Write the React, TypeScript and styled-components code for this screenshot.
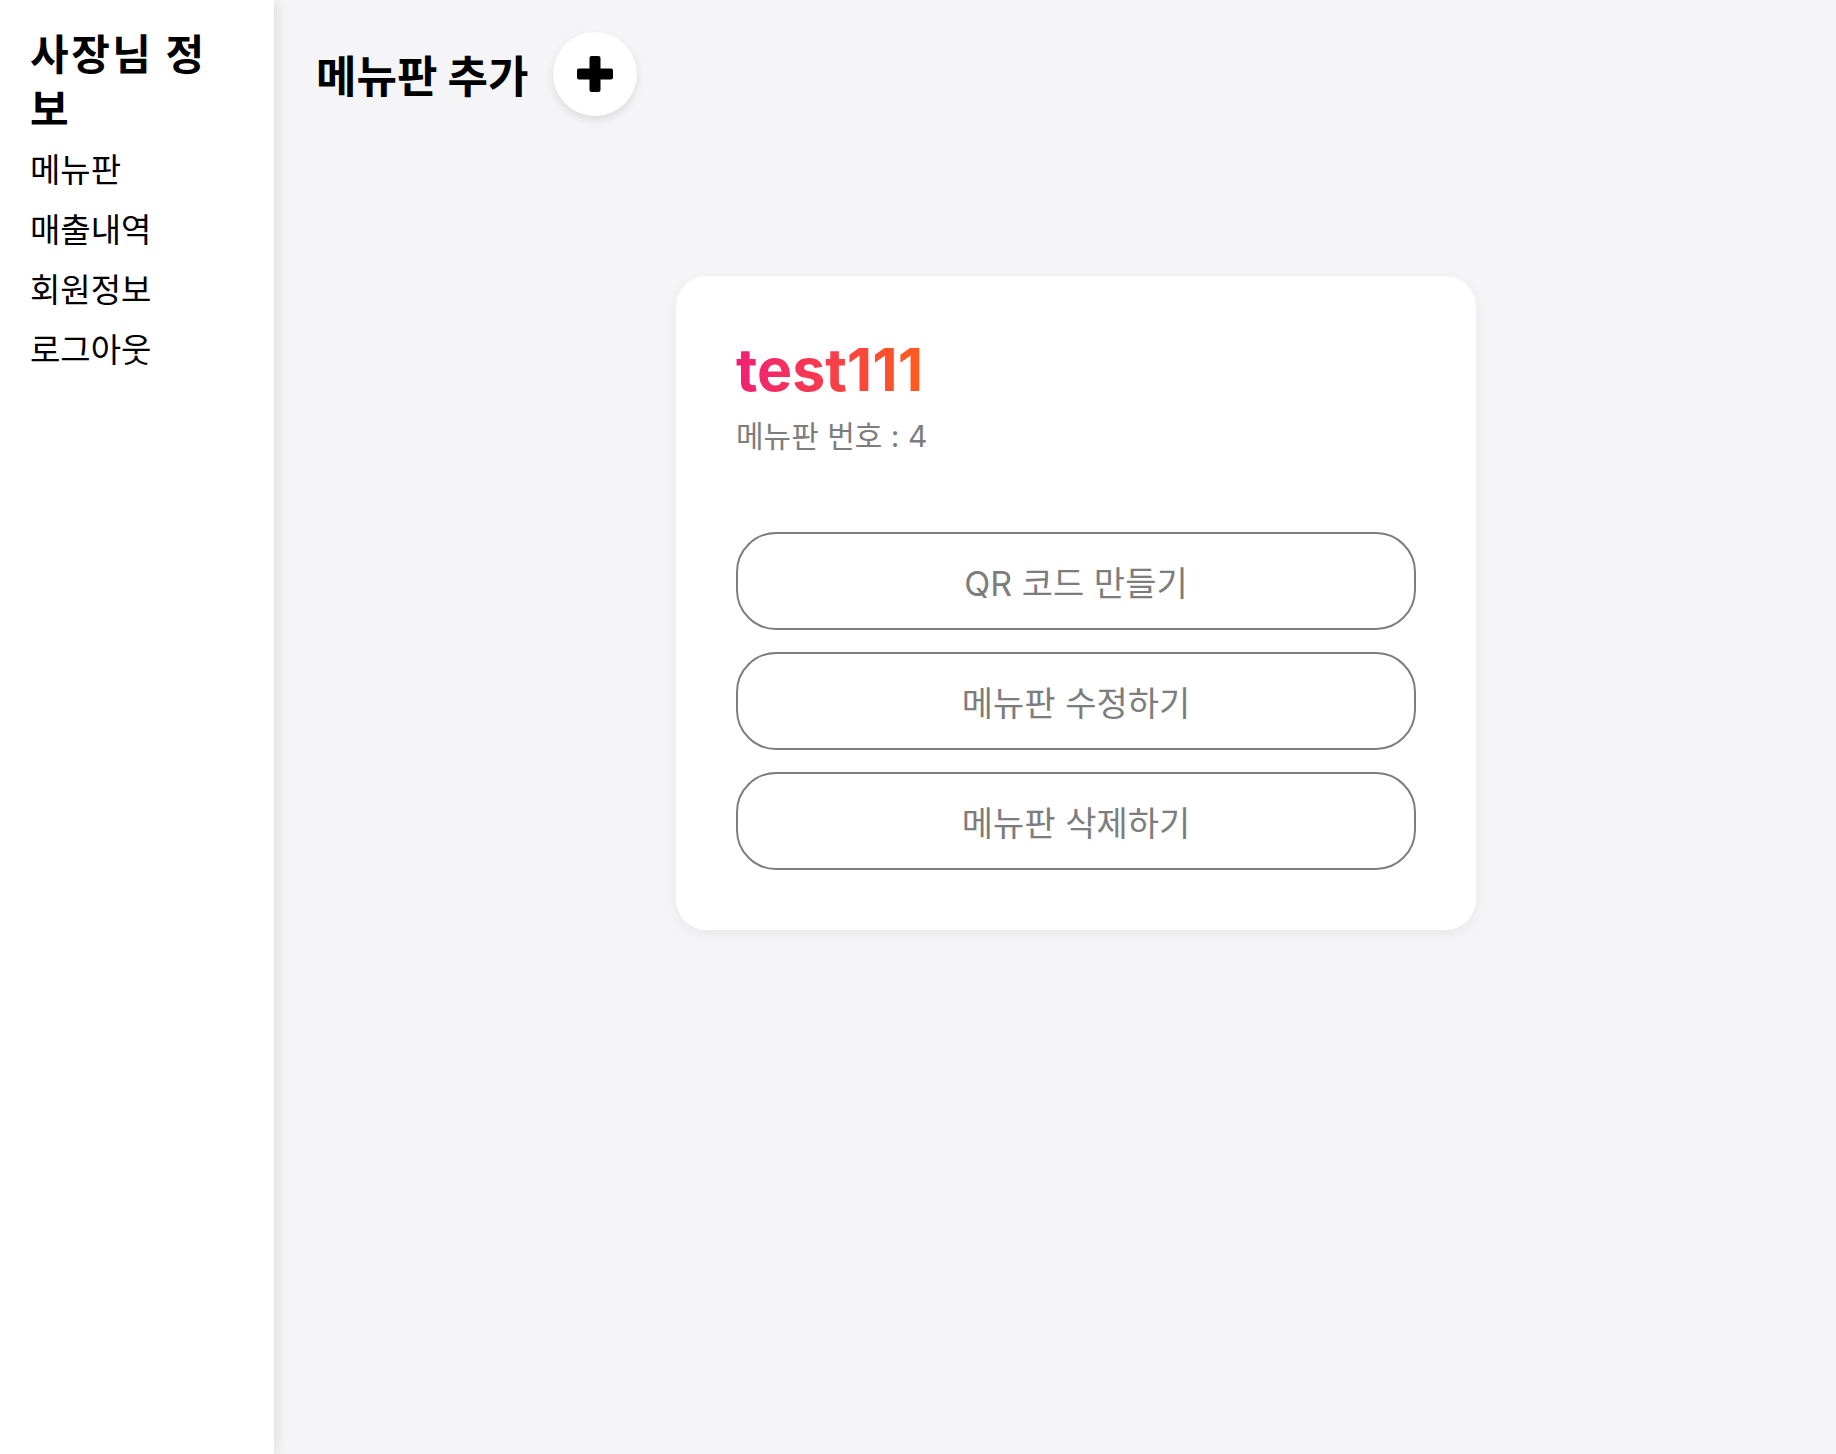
import styled, { createGlobalStyle } from 'styled-components';

const GlobalStyle = createGlobalStyle`
  html, body {
    margin: 0;
    padding: 0;
    height: 100%;
  }
  body {
    font-family: 'Inter', 'Noto Sans CJK KR', sans-serif;
    color: #000;
  }
  #root {
    height: 100%;
  }
`;

const Layout = styled.div`
  display: flex;
  min-height: 100vh;
`;

const Sidebar = styled.aside`
  width: 274px;
  flex-shrink: 0;
  box-sizing: border-box;
  padding: 24px 30px;
  background-color: #fff;
  box-shadow: 3px 0 12px rgba(0, 0, 0, 0.09);
  position: relative;
  z-index: 1;
`;

const SidebarTitle = styled.h2`
  margin: 0 0 4px;
  max-width: 205px;
  font-family: 'Noto Sans CJK KR', sans-serif;
  font-size: 42px;
  font-weight: 700;
  line-height: 55px;
  letter-spacing: 2.5px;
`;

const Nav = styled.nav`
  display: flex;
  flex-direction: column;
`;

const NavItem = styled.a`
  display: block;
  height: 60px;
  line-height: 60px;
  font-family: 'Noto Sans CJK KR', sans-serif;
  font-size: 33px;
  color: #000;
  text-decoration: none;
  cursor: pointer;
`;

const Main = styled.main`
  flex: 1;
  display: flex;
  flex-direction: column;
  padding: 32px 0 0 42px;
  background-color: #f5f5f7;
`;

const Header = styled.div`
  display: flex;
  align-items: center;
  gap: 25px;
`;

const HeaderTitle = styled.h1`
  margin: 0;
  font-family: 'Noto Sans CJK KR', sans-serif;
  font-size: 44px;
  font-weight: 700;
`;

const AddButton = styled.button`
  display: flex;
  align-items: center;
  justify-content: center;
  width: 84px;
  height: 84px;
  padding: 0;
  border: none;
  border-radius: 50%;
  background-color: #fff;
  box-shadow: 0 4px 10px rgba(0, 0, 0, 0.1);
  cursor: pointer;
`;

const CardArea = styled.div`
  display: flex;
  justify-content: center;
  margin-top: 160px;
`;

const Card = styled.section`
  width: 800px;
  box-sizing: border-box;
  padding: 60px;
  border-radius: 30px;
  background-color: #fff;
  box-shadow: 0 4px 14px rgba(0, 0, 0, 0.06);
`;

const BoardName = styled.h3`
  display: inline-block;
  margin: 0;
  font-family: 'Inter', sans-serif;
  font-size: 59px;
  font-weight: 700;
  line-height: 68px;
  background: linear-gradient(90deg, #f21f76 0%, #ff5c1c 100%);
  -webkit-background-clip: text;
  background-clip: text;
  color: transparent;
`;

const BoardNumber = styled.p`
  margin: 15px 0 0;
  font-size: 30px;
  line-height: 34px;
  color: #7d7d7d;
`;

const ButtonList = styled.div`
  display: flex;
  flex-direction: column;
  gap: 22px;
  margin-top: 79px;
`;

const OutlineButton = styled.button`
  height: 98px;
  width: 100%;
  border: 2px solid #7d7d7d;
  border-radius: 40px;
  background-color: #fff;
  font-family: 'Inter', 'Noto Sans CJK KR', sans-serif;
  font-size: 34px;
  color: #7d7d7d;
  cursor: pointer;
`;

function PlusIcon() {
  return (
    <svg width="36" height="36" viewBox="0 0 36 36">
      <rect x="12.5" y="0" width="11" height="36" rx="2" fill="#000" />
      <rect x="0" y="12.5" width="36" height="11" rx="2" fill="#000" />
    </svg>
  );
}

const navItems = ['메뉴판', '매출내역', '회원정보', '로그아웃'];
const actions = ['QR 코드 만들기', '메뉴판 수정하기', '메뉴판 삭제하기'];

function App() {
  return (
    <>
      <GlobalStyle />
      <Layout>
        <Sidebar>
          <SidebarTitle>사장님 정보</SidebarTitle>
          <Nav>
            {navItems.map((item) => (
              <NavItem key={item}>{item}</NavItem>
            ))}
          </Nav>
        </Sidebar>
        <Main>
          <Header>
            <HeaderTitle>메뉴판 추가</HeaderTitle>
            <AddButton aria-label="메뉴판 추가">
              <PlusIcon />
            </AddButton>
          </Header>
          <CardArea>
            <Card>
              <BoardName>test111</BoardName>
              <BoardNumber>메뉴판 번호 : 4</BoardNumber>
              <ButtonList>
                {actions.map((label) => (
                  <OutlineButton key={label}>{label}</OutlineButton>
                ))}
              </ButtonList>
            </Card>
          </CardArea>
        </Main>
      </Layout>
    </>
  );
}

export default App;
